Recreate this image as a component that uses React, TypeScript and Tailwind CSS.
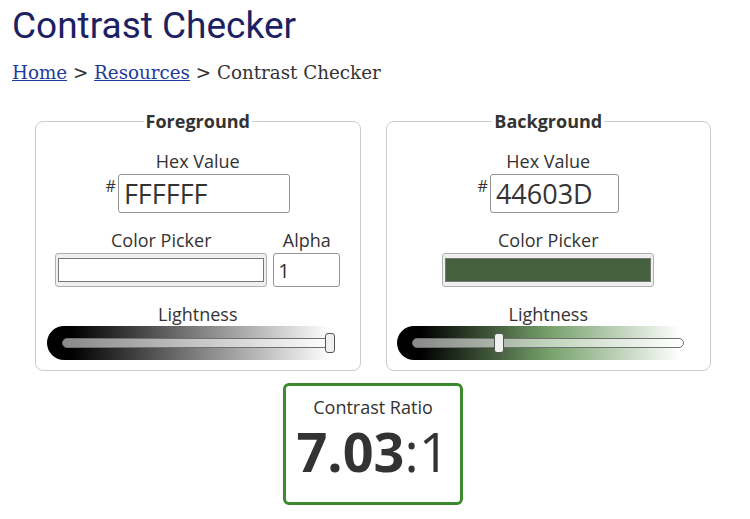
import React from "react";

interface Panel {
  legend: string;
  hex: string;
  hexWidth: string;
  swatch: string;
  showAlpha: boolean;
  gradient: string;
  lightness: number;
}

const panels: Panel[] = [
  {
    legend: "Foreground",
    hex: "FFFFFF",
    hexWidth: "w-[172px]",
    swatch: "#ffffff",
    showAlpha: true,
    gradient: "linear-gradient(to right, #000 8%, hsl(0 0% 50%) 50%, #fff 94%)",
    lightness: 100,
  },
  {
    legend: "Background",
    hex: "44603D",
    hexWidth: "w-[129px]",
    swatch: "#44603d",
    showAlpha: false,
    gradient: "linear-gradient(to right, #000 8%, hsl(108 22% 52%) 50%, #fff 94%)",
    lightness: 31,
  },
];

const ColorPanel: React.FC<{ p: Panel }> = ({ p }) => {
  return (
    <fieldset className="w-[326px] rounded-lg border border-[#cccccc] px-2 pt-[17px] pb-[10px] flex flex-col items-center">
      <legend className="mx-auto px-[2px] text-[18px] leading-6 font-bold text-[#333]">{p.legend}</legend>

      {/* Hex */}
      <div className="text-[18px] leading-[22px] text-[#333]">Hex Value</div>
      <div className="mt-[2px] flex items-start">
        <span className="mt-[4px] mr-[2px] text-[16px] leading-none text-[#333]">#</span>
        <input
          readOnly
          value={p.hex}
          className={`${p.hexWidth} h-[39px] rounded-[3px] border border-[#959595] bg-white px-[5px] pt-[2px] text-[27px] text-[#333] outline-none`}
        />
      </div>

      {/* Picker + alpha */}
      <div className="mt-4 flex items-end gap-[6px]">
        <div className="flex flex-col items-center">
          <div className="text-[18px] leading-[22px] text-[#333]">Color Picker</div>
          <div className="mt-[2px] h-[34px] w-[212px] rounded-[3px] border border-[#b0b0b0] bg-[#efefef] px-[2px] py-[4px]">
            <div className="h-full w-full border border-[#777]" style={{ backgroundColor: p.swatch }} />
          </div>
        </div>
        {p.showAlpha && (
          <div className="flex flex-col items-center">
            <div className="text-[18px] leading-[22px] text-[#333]">Alpha</div>
            <input
              readOnly
              value="1"
              className="mt-[2px] h-[34px] w-[67px] rounded-[3px] border border-[#959595] bg-white px-[4px] text-[20px] text-[#333] outline-none"
            />
          </div>
        )}
      </div>

      {/* Lightness */}
      <div className="mt-4 text-[18px] leading-[22px] text-[#333]">Lightness</div>
      <div
        className="mt-[1px] flex h-[34px] w-[302px] items-center justify-center rounded-full"
        style={{ backgroundImage: p.gradient }}
      >
        <div className="relative h-[10px] w-[272px] rounded-full border border-[#6f6f6f] bg-white/55">
          <div
            className="absolute top-[-6px] h-[20px] w-[10px] rounded-[3px] border-[1.5px] border-[#555] bg-[#f1f1f1]"
            style={{ left: `calc(${p.lightness / 100} * 262px)` }}
          />
        </div>
      </div>
    </fieldset>
  );
};

const App: React.FC = () => {
  return (
    <div className="min-h-screen bg-white pt-[4px] font-['Open_Sans',sans-serif] text-[#333]">
      <h1 className="pl-3 font-['Roboto',sans-serif] text-[37px] leading-[44px] font-normal text-[#1b2163]">
        Contrast Checker
      </h1>

      <nav className="mt-3 pl-3 font-['DejaVu_Serif',serif] text-[18.3px] leading-[26px] text-[#333]">
        <a href="#" className="text-[#1f3a9e] underline">Home</a>
        {" > "}
        <a href="#" className="text-[#1f3a9e] underline">Resources</a>
        {" > Contrast Checker"}
      </nav>

      <main className="ml-[35px] mt-[23px] w-[676px]">
        <div className="flex gap-[25px]">
          {panels.map((p) => (
            <ColorPanel key={p.legend} p={p} />
          ))}
        </div>

        {/* Ratio */}
        <div className="mx-auto mt-3 flex h-[122px] w-[180px] flex-col items-center rounded-md border-[3px] border-[#3c8a2e] pt-[10px]">
          <div className="text-[18px] leading-[22px] text-[#333]">Contrast Ratio</div>
          <div className="mt-[2px] text-[54px] leading-[62px] text-[#333]">
            <span className="font-bold">7.03</span>:1
          </div>
        </div>
      </main>
    </div>
  );
};

export default App;
